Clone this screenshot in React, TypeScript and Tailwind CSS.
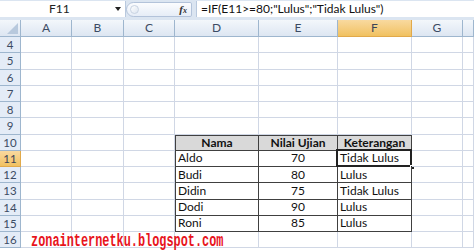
import React from "react";

const cols = ["A", "B", "C", "D", "E", "F", "G", ""];
const colW = [51, 52, 51, 84, 79, 74, 51, 11];
const rows = [4, 5, 6, 7, 8, 9, 10, 11, 12, 13, 14, 15, 16];

const data: Record<number, [string, string, string]> = {
  11: ["Aldo", "70", "Tidak Lulus"],
  12: ["Budi", "80", "Lulus"],
  13: ["Didin", "75", "Tidak Lulus"],
  14: ["Dodi", "90", "Lulus"],
  15: ["Roni", "85", "Lulus"],
};

const gridFont = { fontFamily: "Lato, 'Open Sans', sans-serif" };

export default function App() {
  return (
    <div className="relative w-[474px] h-[251px] overflow-hidden bg-white" style={gridFont}>
      {/* formula bar */}
      <div className="flex h-[20px] bg-[#dbe5f1] pt-[1px] pb-[3px]">
        <div className="relative flex w-[126px] items-center justify-start pl-[49px] bg-white text-[12px] text-[#222] border-r border-[#b9c9de]">
          <span>F11</span>
          <span className="absolute right-[4px] top-[6px] w-0 h-0 border-l-[3px] border-r-[3px] border-t-[4px] border-l-transparent border-r-transparent border-t-[#222]"></span>
        </div>
        <div className="flex w-[70px] items-center justify-end pr-[4px] bg-[#dbe5f1]">
          <div className="relative flex h-[15px] w-[66px] items-center justify-end rounded-l-[8px] rounded-r-[2px] border border-[#b3c3da] bg-gradient-to-b from-[#fbfcfe] to-[#e6edf7] pr-[4px]">
            <span className="absolute left-[3px] top-[2px] h-[9px] w-[9px] rounded-full border border-[#c8d3e2] bg-gradient-to-br from-[#ffffff] to-[#dde5f0]"></span>
            <span className="text-[11px] italic font-bold text-[#333]" style={{ fontFamily: "'Liberation Serif', serif" }}>
              f<span className="text-[8px]">x</span>
            </span>
          </div>
        </div>
        <div className="flex flex-1 items-center bg-white pl-[4px] text-[12px] text-[#111] border-l border-[#b9c9de]">
          =IF(E11&gt;=80;"Lulus";"Tidak Lulus")
        </div>
      </div>

      {/* grid */}
      <div className="grid" style={{ gridTemplateColumns: `21px ${colW.map((w) => w + "px").join(" ")}` }}>
        {/* header row */}
        <div className="relative h-[17px] bg-gradient-to-b from-[#f3f7fb] to-[#dde6f2] border-r border-b border-[#9eb6ce]">
          <span className="absolute right-[2px] bottom-[2px] w-0 h-0 border-b-[11px] border-l-[11px] border-b-[#b8c9dd] border-l-transparent"></span>
        </div>
        {cols.map((c, i) => (
          <div
            key={c + i}
            className={`flex h-[17px] items-center justify-center text-[12px] border-r border-b ${
              c === "F"
                ? "bg-gradient-to-b from-[#f9d99f] to-[#f1c15f] text-[#3b4456] border-[#e1a94a]"
                : "bg-gradient-to-b from-[#f3f7fb] to-[#dde6f2] text-[#3b4b63] border-[#9eb6ce]"
            }`}
          >
            {c}
          </div>
        ))}

        {rows.map((r) => {
          const cells: React.ReactNode[] = [];
          cells.push(
            <div
              key={"h" + r}
              className={`flex h-[16.25px] items-center justify-center text-[11.5px] border-r border-b ${
                r === 11
                  ? "bg-gradient-to-b from-[#f9d99f] to-[#f1c15f] text-[#3b4456] border-[#e1a94a]"
                  : "bg-[#e4ecf7] text-[#3b4b63] border-[#9eb6ce]"
              }`}
            >
              {r}
            </div>
          );
          cols.forEach((c, i) => {
            let content: React.ReactNode = null;
            let cls = "border-r border-b border-[#d0d7e5]";
            if (r === 10 && (c === "D" || c === "E" || c === "F")) {
              cls = "border-r border-b border-[#404040] bg-[#d9d9d9] justify-center font-bold text-[12px]";
              content = c === "D" ? "Nama" : c === "E" ? "Nilai Ujian" : "Keterangan";
            } else if (data[r] && (c === "D" || c === "E" || c === "F")) {
              const v = data[r];
              if (c === "D") {
                cls = "border-r border-b border-[#404040] pl-[2px] text-[12px]";
                content = v[0];
              } else if (c === "E") {
                cls = "border-r border-b border-[#404040] justify-center text-[12px]";
                content = v[1];
              } else {
                cls = "border-r border-b border-[#404040] pl-[2px] text-[12px]";
                content = v[2];
              }
            }
            if (r === 10 && c === "D") cls += " border-l border-t";
            if (r === 10 && (c === "E" || c === "F")) cls += " border-t";
            if (data[r] && c === "D") cls += " border-l";
            const sel = r === 11 && c === "F";
            cells.push(
              <div key={r + c + i} className={`relative flex h-[16.25px] items-center text-[#111] whitespace-nowrap ${cls}`}>
                {content}
                {sel && (
                  <>
                    <span className="pointer-events-none absolute left-[-2px] top-[-2px] right-[-1px] bottom-[-1px] border-2 border-[#222]"></span>
                    <span className="absolute right-[-4px] bottom-[-4px] h-[5px] w-[5px] bg-[#222] border border-white"></span>
                  </>
                )}
              </div>
            );
          });
          return <React.Fragment key={r}>{cells}</React.Fragment>;
        })}
      </div>

      {/* watermark */}
      <div
        className="absolute left-[31px] top-[232px] origin-left text-[18px] leading-none font-bold text-[#e8141c] whitespace-nowrap"
        style={{ fontFamily: "'Liberation Mono', monospace", transform: "scaleX(0.66)" }}
      >
        zonainternetku.blogspot.com
      </div>
    </div>
  );
}
